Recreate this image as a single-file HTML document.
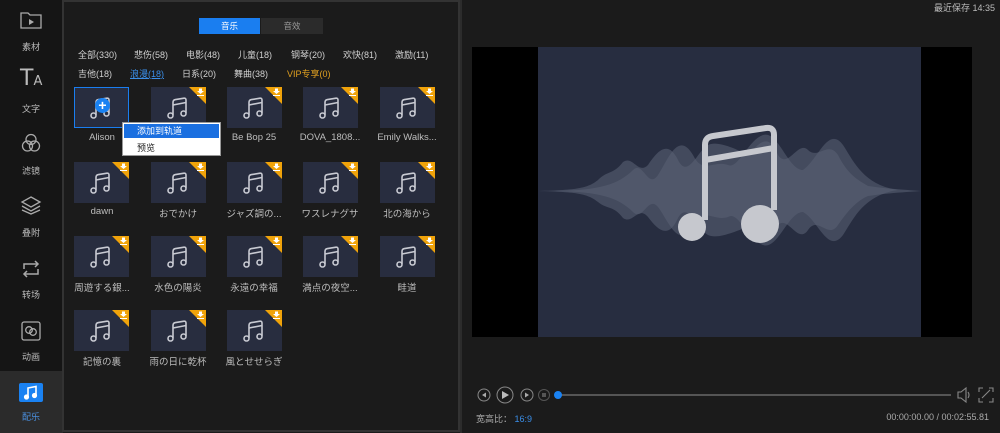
<!DOCTYPE html>
<html><head><meta charset="utf-8"><style>
*{margin:0;padding:0;box-sizing:border-box}
body{width:1000px;height:433px;background:#1b1b1b;position:relative;overflow:hidden;font-family:"Liberation Sans","Noto Sans CJK SC",sans-serif;color:#bfbfbf;font-size:9px}
.a{position:absolute}
.side{left:0;top:0;width:62px;height:433px;background:#151515}
.si{position:absolute;left:0;width:62px;text-align:center;font-size:9px;color:#bbb}
.panel{left:62px;top:0;width:398px;height:432px;background:#1b1b1b;border:2px solid #333;border-bottom:2px solid #333}
.tile{position:absolute;width:55px;height:41px;background:#282d3f;overflow:hidden}
.tile .tri{position:absolute;right:0;top:0;width:0;height:0;border-top:17px solid #f0a30a;border-left:17px solid transparent}
.tile .dl{position:absolute;right:2px;top:1px}
.lbl{position:absolute;width:76px;text-align:center;font-size:9.5px;color:#bdbdbd;white-space:nowrap}
.cat{position:absolute;font-size:9px;color:#d0d0d0}
</style></head><body>
<svg width="0" height="0" style="position:absolute"><defs>
<symbol id="n" viewBox="0 0 55 41"><g fill="none" stroke="#c8cad2" stroke-width="1.6"><path d="M22 28V15.5Q22 13 24.5 12.6L33 11.2Q35 11 35 13V26"/><path d="M22 18L35 15.5"/><circle cx="19.5" cy="28.5" r="2.5"/><circle cx="32.5" cy="26.5" r="2.5"/></g><path d="M48 1.5h3v2.5h2l-3.5 3l-3.5-3h2zM46 8h7v1h-7z" fill="#fff"/></symbol>
</defs></svg>

<div class="a side"></div>
<svg class="a" style="left:20px;top:11px" width="22" height="18" viewBox="0 0 22 18"><path d="M1 2h7l2 2h11v13H1z" fill="none" stroke="#aaa" stroke-width="1.3"/><path d="M9 8l5 3-5 3z" fill="#aaa"/></svg>
<div class="si" style="top:40px">素材</div>
<div class="a" style="left:20px;top:68px;font-size:22px;color:#bbb;font-family:'DejaVu Sans',sans-serif;line-height:22px">T<span style="font-size:13px">A</span></div>
<div class="si" style="top:102px">文字</div>
<svg class="a" style="left:21px;top:133px" width="20" height="20" viewBox="0 0 20 20" fill="none" stroke="#aaa" stroke-width="1.3"><circle cx="10" cy="6.5" r="5"/><circle cx="6.5" cy="13" r="5"/><circle cx="13.5" cy="13" r="5"/></svg>
<div class="si" style="top:164px">滤镜</div>
<svg class="a" style="left:20px;top:195px" width="22" height="20" viewBox="0 0 22 20" fill="none" stroke="#aaa" stroke-width="1.3"><path d="M11 2l9 5-9 5-9-5z"/><path d="M2 11l9 5 9-5"/><path d="M2 15l9 4 9-4"/></svg>
<div class="si" style="top:226px">叠附</div>
<svg class="a" style="left:20px;top:259px" width="22" height="20" viewBox="0 0 22 20" fill="none" stroke="#aaa" stroke-width="1.5"><path d="M4 10V5h14"/><path d="M15 2l3 3-3 3"/><path d="M18 10v5H4"/><path d="M7 12l-3 3 3 3"/></svg>
<div class="si" style="top:288px">转场</div>
<svg class="a" style="left:21px;top:321px" width="20" height="20" viewBox="0 0 20 20" fill="none" stroke="#aaa" stroke-width="1.3"><rect x="1" y="1" width="18" height="18" rx="2"/><circle cx="8" cy="9" r="3.3"/><circle cx="12" cy="11" r="3.3"/></svg>
<div class="si" style="top:350px">动画</div>
<div class="a" style="left:0;top:371px;width:63px;height:62px;background:#2b2b2b"></div>
<div class="a" style="left:19px;top:383px;width:24px;height:19px;background:#1a82f2;border-radius:2px"></div>
<svg class="a" style="left:19px;top:383px" width="24" height="19" viewBox="0 0 24 19" fill="none" stroke="#fff" stroke-width="1.6"><path d="M9 14V5l8-1.5V12"/><circle cx="7.5" cy="14" r="1.8" fill="#fff"/><circle cx="15.5" cy="12.5" r="1.8" fill="#fff"/></svg>
<div class="si" style="top:410px;color:#4a90e0">配乐</div>

<div class="a panel"></div>
<div class="a" style="left:199px;top:18px;width:61px;height:16px;background:#1a7ef0;color:#fff;text-align:center;line-height:16px;font-size:8.5px">音乐</div>
<div class="a" style="left:261px;top:18px;width:62px;height:16px;background:#2b2b2b;color:#999;text-align:center;line-height:16px;font-size:8.5px">音效</div>

<div class="cat" style="left:78px;top:48px">全部(330)</div>
<div class="cat" style="left:134px;top:48px">悲伤(58)</div>
<div class="cat" style="left:186px;top:48px">电影(48)</div>
<div class="cat" style="left:238px;top:48px">儿童(18)</div>
<div class="cat" style="left:291px;top:48px">钢琴(20)</div>
<div class="cat" style="left:343px;top:48px">欢快(81)</div>
<div class="cat" style="left:395px;top:48px">激励(11)</div>
<div class="cat" style="left:78px;top:67px">吉他(18)</div>
<div class="cat" style="left:130px;top:67px;color:#3a8ee8;text-decoration:underline">浪漫(18)</div>
<div class="cat" style="left:182px;top:67px">日系(20)</div>
<div class="cat" style="left:234px;top:67px">舞曲(38)</div>
<div class="cat" style="left:287px;top:67px;color:#e0a020">VIP专享(0)</div>

<div class="tile" style="left:74px;top:87px;border:1px solid #1a7ef0"><svg width="55" height="41" viewBox="1 1 55 41"><g fill="none" stroke="#c8cad2" stroke-width="1.6"><path d="M22 28V15.5Q22 13 24.5 12.6L33 11.2Q35 11 35 13V26"/><circle cx="19.5" cy="28.5" r="2.5"/><circle cx="32.5" cy="26.5" r="2.5"/></g></svg></div>
<div class="a" style="left:95px;top:98px;width:15px;height:15px;border-radius:50%;background:#1a82f2;color:#fff;text-align:center;line-height:14px;font-size:14px;font-weight:bold">+</div>

<div class="tile" style="left:151px;top:87px"><div class="tri"></div><svg class="a" style="left:0;top:0" width="55" height="41"><use href="#n"/></svg></div>
<div class="tile" style="left:227px;top:87px"><div class="tri"></div><svg class="a" style="left:0;top:0" width="55" height="41"><use href="#n"/></svg></div>
<div class="tile" style="left:303px;top:87px"><div class="tri"></div><svg class="a" style="left:0;top:0" width="55" height="41"><use href="#n"/></svg></div>
<div class="tile" style="left:380px;top:87px"><div class="tri"></div><svg class="a" style="left:0;top:0" width="55" height="41"><use href="#n"/></svg></div>
<div class="lbl" style="left:64px;top:132px">Alison</div>
<div class="lbl" style="left:216px;top:132px">Be Bop 25</div>
<div class="lbl" style="left:292px;top:132px">DOVA_1808...</div>
<div class="lbl" style="left:369px;top:132px">Emily Walks...</div>

<div class="tile" style="left:74px;top:162px"><div class="tri"></div><svg class="a" style="left:0;top:0" width="55" height="41"><use href="#n"/></svg></div>
<div class="tile" style="left:151px;top:162px"><div class="tri"></div><svg class="a" style="left:0;top:0" width="55" height="41"><use href="#n"/></svg></div>
<div class="tile" style="left:227px;top:162px"><div class="tri"></div><svg class="a" style="left:0;top:0" width="55" height="41"><use href="#n"/></svg></div>
<div class="tile" style="left:303px;top:162px"><div class="tri"></div><svg class="a" style="left:0;top:0" width="55" height="41"><use href="#n"/></svg></div>
<div class="tile" style="left:380px;top:162px"><div class="tri"></div><svg class="a" style="left:0;top:0" width="55" height="41"><use href="#n"/></svg></div>
<div class="lbl" style="left:64px;top:206px">dawn</div>
<div class="lbl" style="left:140px;top:206px">おでかけ</div>
<div class="lbl" style="left:216px;top:206px">ジャズ調の...</div>
<div class="lbl" style="left:292px;top:206px">ワスレナグサ</div>
<div class="lbl" style="left:369px;top:206px">北の海から</div>

<div class="tile" style="left:74px;top:236px"><div class="tri"></div><svg class="a" style="left:0;top:0" width="55" height="41"><use href="#n"/></svg></div>
<div class="tile" style="left:151px;top:236px"><div class="tri"></div><svg class="a" style="left:0;top:0" width="55" height="41"><use href="#n"/></svg></div>
<div class="tile" style="left:227px;top:236px"><div class="tri"></div><svg class="a" style="left:0;top:0" width="55" height="41"><use href="#n"/></svg></div>
<div class="tile" style="left:303px;top:236px"><div class="tri"></div><svg class="a" style="left:0;top:0" width="55" height="41"><use href="#n"/></svg></div>
<div class="tile" style="left:380px;top:236px"><div class="tri"></div><svg class="a" style="left:0;top:0" width="55" height="41"><use href="#n"/></svg></div>
<div class="lbl" style="left:64px;top:280px">周遊する銀...</div>
<div class="lbl" style="left:140px;top:280px">水色の陽炎</div>
<div class="lbl" style="left:216px;top:280px">永遠の幸福</div>
<div class="lbl" style="left:292px;top:280px">満点の夜空...</div>
<div class="lbl" style="left:369px;top:280px">畦道</div>

<div class="tile" style="left:74px;top:310px"><div class="tri"></div><svg class="a" style="left:0;top:0" width="55" height="41"><use href="#n"/></svg></div>
<div class="tile" style="left:151px;top:310px"><div class="tri"></div><svg class="a" style="left:0;top:0" width="55" height="41"><use href="#n"/></svg></div>
<div class="tile" style="left:227px;top:310px"><div class="tri"></div><svg class="a" style="left:0;top:0" width="55" height="41"><use href="#n"/></svg></div>
<div class="lbl" style="left:64px;top:354px">記憶の裏</div>
<div class="lbl" style="left:140px;top:354px">雨の日に乾杯</div>
<div class="lbl" style="left:216px;top:354px">風とせせらぎ</div>

<div class="a" style="left:122px;top:122px;width:99px;height:34px;background:#fff;border:1px solid #999"></div>
<div class="a" style="left:124px;top:124px;width:95px;height:14px;background:#1a6fe0;color:#fff;font-size:9px;line-height:14px;padding-left:13px">添加到轨道</div>
<div class="a" style="left:137px;top:141px;color:#222;font-size:9px">预览</div>

<div class="a" style="left:460px;top:0;width:2px;height:433px;background:#2c2c2c"></div>
<div class="a" style="left:934px;top:1px;font-size:9px;color:#bbb">最近保存 14:35</div>
<div class="a" style="left:472px;top:47px;width:500px;height:290px;background:#000"></div>
<div class="a" style="left:538px;top:47px;width:383px;height:290px;background:#272d40"></div>
<svg class="a" style="left:538px;top:100px" width="383" height="180" viewBox="0 0 383 180">
<path d="M0 91C40 90 50 88 60 80C70 70 75 75 85 62C95 55 100 75 110 65C120 50 130 40 140 60C150 80 160 50 170 45C180 40 200 50 210 55C220 45 230 30 240 55C250 70 260 40 270 50C280 60 290 40 300 55C310 75 320 80 330 86C350 89 370 90 383 91C370 92 350 93 330 96C320 100 310 110 300 125C290 140 280 115 270 130C260 145 250 115 240 125C230 150 220 140 210 127C200 130 180 140 170 135C160 130 150 100 140 118C130 140 120 130 110 117C100 105 95 125 85 118C75 105 70 110 60 102C50 94 40 92 0 91Z" fill="#4a5164" opacity="0.85"/>
<path d="M20 91C60 90 80 85 95 70C105 60 110 90 120 75C130 60 140 30 155 55C165 75 175 60 190 65C200 70 210 40 225 35C240 30 250 70 265 70C280 60 290 25 305 45C315 60 325 85 360 90C325 95 315 120 305 135C290 155 280 120 265 112C250 112 240 150 225 145C210 140 200 110 190 117C175 122 165 105 155 127C140 150 130 120 120 107C110 95 105 122 95 112C80 97 60 92 20 91Z" fill="#5b6275" opacity="0.55"/>
<g fill="none" stroke="#c6c8ce" stroke-width="6" stroke-linejoin="round"><path d="M167 120V45Q167 37 175 36L228 28Q236 27 236 35V110"/><path d="M167 60L236 48"/></g>
<circle cx="154" cy="127" r="14" fill="#c6c8ce"/><circle cx="222" cy="124" r="19" fill="#c6c8ce"/>
</svg>

<svg class="a" style="left:475px;top:386px" width="480" height="18" viewBox="0 0 480 18">
<g fill="none" stroke="#888" stroke-width="1"><circle cx="9" cy="9" r="6"/><circle cx="30" cy="9" r="8"/><circle cx="52" cy="9" r="6"/><circle cx="69" cy="9" r="5.5" stroke="#555"/></g>
<path d="M11 6.5v5l-4-2.5z" fill="#aaa"/><path d="M27 5v8l7-4z" fill="#bbb"/><path d="M50 6.5v5l4-2.5z" fill="#aaa"/><rect x="67" y="7" width="4" height="4" fill="#555"/>
<line x1="82" y1="9" x2="476" y2="9" stroke="#555" stroke-width="2"/><circle cx="83" cy="9" r="4" fill="#1a82f2"/>
</svg>
<svg class="a" style="left:956px;top:386px" width="40" height="18" viewBox="0 0 40 18" fill="none" stroke="#888" stroke-width="1.1"><path d="M2 6h3l5-4v14l-5-4H2z"/><path d="M12 6q2 3 0 6"/><path d="M23 6V2h4M33 2h4v4M37 12v4h-4M27 16h-4v-4"/><path d="M26 12l8-8"/></svg>
<div class="a" style="left:476px;top:412px;font-size:9px;color:#aaa">宽高比： <span style="color:#3a8ee8">16:9</span></div>
<div class="a" style="right:11px;top:412px;font-size:9px;color:#aaa">00:00:00.00 / 00:02:55.81</div>
</body></html>
